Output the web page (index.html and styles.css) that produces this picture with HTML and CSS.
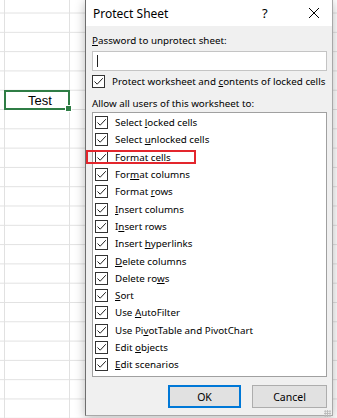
FILE: index.html
```html
<!DOCTYPE html>
<html lang="en">
<head>
    <meta charset="UTF-8">
    <title>Protect Sheet</title>
    <link rel="stylesheet" href="styles.css">
</head>
<body>
    <div class="sheet">
        <div class="cell-active">
            <span>Test</span>
            <i class="fill-handle"></i>
        </div>

        <div class="dialog">
            <div class="titlebar">
                <span class="title">Protect Sheet</span>
                <span class="help">?</span>
                <span class="close">
                    <svg width="12" height="12" viewBox="0 0 12 12"><path d="M1 1 L11 11 M11 1 L1 11" stroke="#000" stroke-width="1" fill="none"/></svg>
                </span>
            </div>

            <div class="dialog-body">
                <div class="label"><u>P</u>assword to unprotect sheet:</div>
                <div class="input"><i class="caret"></i></div>

                <div class="check-row">
                    <span class="box"><svg width="11" height="11" viewBox="0 0 11 11"><path d="M1.5 5.5 L4.2 8.2 L9.8 2.2" stroke="#222" stroke-width="1" fill="none"/></svg></span>
                    <span class="text">Protect worksheet and <u>c</u>ontents of locked cells</span>
                </div>

                <div class="label allow">Allow all users of this worksheet to:</div>

                <div class="listbox">
                    <div class="item"><span class="box"><svg width="11" height="11" viewBox="0 0 11 11"><path d="M1.5 5.5 L4.2 8.2 L9.8 2.2" stroke="#222" stroke-width="1" fill="none"/></svg></span><span class="text">Select <u>l</u>ocked cells</span></div>
                    <div class="item"><span class="box"><svg width="11" height="11" viewBox="0 0 11 11"><path d="M1.5 5.5 L4.2 8.2 L9.8 2.2" stroke="#222" stroke-width="1" fill="none"/></svg></span><span class="text">Select <u>u</u>nlocked cells</span></div>
                    <div class="item"><span class="box"><svg width="11" height="11" viewBox="0 0 11 11"><path d="M1.5 5.5 L4.2 8.2 L9.8 2.2" stroke="#222" stroke-width="1" fill="none"/></svg></span><span class="text"><u>F</u>ormat cells</span><i class="highlight"></i></div>
                    <div class="item"><span class="box"><svg width="11" height="11" viewBox="0 0 11 11"><path d="M1.5 5.5 L4.2 8.2 L9.8 2.2" stroke="#222" stroke-width="1" fill="none"/></svg></span><span class="text">For<u>m</u>at columns</span></div>
                    <div class="item"><span class="box"><svg width="11" height="11" viewBox="0 0 11 11"><path d="M1.5 5.5 L4.2 8.2 L9.8 2.2" stroke="#222" stroke-width="1" fill="none"/></svg></span><span class="text">Format <u>r</u>ows</span></div>
                    <div class="item"><span class="box"><svg width="11" height="11" viewBox="0 0 11 11"><path d="M1.5 5.5 L4.2 8.2 L9.8 2.2" stroke="#222" stroke-width="1" fill="none"/></svg></span><span class="text"><u>I</u>nsert columns</span></div>
                    <div class="item"><span class="box"><svg width="11" height="11" viewBox="0 0 11 11"><path d="M1.5 5.5 L4.2 8.2 L9.8 2.2" stroke="#222" stroke-width="1" fill="none"/></svg></span><span class="text">I<u>n</u>sert rows</span></div>
                    <div class="item"><span class="box"><svg width="11" height="11" viewBox="0 0 11 11"><path d="M1.5 5.5 L4.2 8.2 L9.8 2.2" stroke="#222" stroke-width="1" fill="none"/></svg></span><span class="text">Insert <u>h</u>yperlinks</span></div>
                    <div class="item"><span class="box"><svg width="11" height="11" viewBox="0 0 11 11"><path d="M1.5 5.5 L4.2 8.2 L9.8 2.2" stroke="#222" stroke-width="1" fill="none"/></svg></span><span class="text"><u>D</u>elete columns</span></div>
                    <div class="item"><span class="box"><svg width="11" height="11" viewBox="0 0 11 11"><path d="M1.5 5.5 L4.2 8.2 L9.8 2.2" stroke="#222" stroke-width="1" fill="none"/></svg></span><span class="text">Delete ro<u>w</u>s</span></div>
                    <div class="item"><span class="box"><svg width="11" height="11" viewBox="0 0 11 11"><path d="M1.5 5.5 L4.2 8.2 L9.8 2.2" stroke="#222" stroke-width="1" fill="none"/></svg></span><span class="text"><u>S</u>ort</span></div>
                    <div class="item"><span class="box"><svg width="11" height="11" viewBox="0 0 11 11"><path d="M1.5 5.5 L4.2 8.2 L9.8 2.2" stroke="#222" stroke-width="1" fill="none"/></svg></span><span class="text">Use <u>A</u>utoFilter</span></div>
                    <div class="item"><span class="box"><svg width="11" height="11" viewBox="0 0 11 11"><path d="M1.5 5.5 L4.2 8.2 L9.8 2.2" stroke="#222" stroke-width="1" fill="none"/></svg></span><span class="text">Use Pi<u>v</u>otTable and PivotChart</span></div>
                    <div class="item"><span class="box"><svg width="11" height="11" viewBox="0 0 11 11"><path d="M1.5 5.5 L4.2 8.2 L9.8 2.2" stroke="#222" stroke-width="1" fill="none"/></svg></span><span class="text">Edit <u>o</u>bjects</span></div>
                    <div class="item"><span class="box"><svg width="11" height="11" viewBox="0 0 11 11"><path d="M1.5 5.5 L4.2 8.2 L9.8 2.2" stroke="#222" stroke-width="1" fill="none"/></svg></span><span class="text"><u>E</u>dit scenarios</span></div>
                </div>

                <div class="buttons">
                    <button class="default">OK</button>
                    <button>Cancel</button>
                </div>
                <i class="grip"></i>
            </div>
        </div>
    </div>
</body>
</html>
```

FILE: styles.css
```css
body {
    margin: 0;
    font-family: 'Noto Sans', sans-serif;
    color: #000;
    overflow: hidden;
}
.sheet {
    position: relative;
    width: 337px;
    height: 418px;
    padding: 90px 0 0 4px;
    box-sizing: border-box;
    background-color: #fff;
    background-image:
        linear-gradient(to right, transparent 4px, #e1e1e1 4px, #e1e1e1 5px, transparent 5px, transparent 69px, #e1e1e1 69px, #e1e1e1 70px, transparent 70px),
        repeating-linear-gradient(to bottom, transparent 0, transparent 12.8px, #e1e1e1 12.8px, #e1e1e1 13.8px, transparent 13.8px, transparent 19.3px);
    background-size: 100% 100%, 100% 19.3px;
}
.cell-active {
    position: relative;
    width: 66px;
    height: 20px;
    box-sizing: border-box;
    border: 2px solid #2f7d45;
    background: #fff;
    font-family: 'Liberation Sans', sans-serif;
    font-size: 13px;
    display: flex;
    align-items: center;
    justify-content: center;
    padding-left: 6px;
}
.fill-handle {
    position: absolute;
    right: -4px;
    bottom: -4px;
    width: 5px;
    height: 5px;
    background: #2f7d45;
    border: 1px solid #fff;
}

.dialog {
    position: absolute;
    left: 85px;
    top: 0;
    width: 248px;
    height: 416px;
    box-sizing: border-box;
    background: #f0f0f0;
    border-left: 1px solid #6e6e6e;
    border-right: 1px solid #a8a8a8;
    border-bottom: 1px solid #a8a8a8;
    box-shadow: 0 2px 10px rgba(0,0,0,0.28);
}
.titlebar {
    height: 26px;
    background: #fff;
    display: flex;
    align-items: center;
    padding-left: 7px;
    font-size: 12px;
}
.title {
    flex: 1;
}
.help {
    width: 46px;
    font-size: 13px;
}
.close {
    width: 24px;
    display: flex;
    align-items: center;
}

.dialog-body {
    position: relative;
    padding: 7px 5px 0 6px;
    font-size: 9.8px;
}
.label {
    height: 16px;
    line-height: 16px;
    white-space: nowrap;
}
.text {
    white-space: nowrap;
}
.input {
    margin-top: 2px;
    height: 20px;
    box-sizing: border-box;
    background: #fff;
    border: 1px solid #c4c4c4;
    position: relative;
}
.caret {
    position: absolute;
    left: 4px;
    top: 3px;
    width: 1px;
    height: 12px;
    background: #222;
}
.check-row {
    margin-top: 2px;
    height: 16px;
    display: flex;
    align-items: center;
    gap: 7px;
}
.box {
    width: 13px;
    height: 13px;
    box-sizing: border-box;
    border: 1px solid #333;
    background: #fff;
    display: flex;
    align-items: center;
    justify-content: center;
    flex-shrink: 0;
}
.allow {
    margin-top: 7px;
}
.listbox {
    height: 265px;
    box-sizing: border-box;
    background: #fff;
    border: 1px solid #a0a0a0;
    padding: 1px 0 0 2px;
}
.item {
    position: relative;
    height: 17.3px;
    display: flex;
    align-items: center;
    gap: 7px;
}
.highlight {
    position: absolute;
    left: -9px;
    top: 1px;
    width: 110px;
    height: 14px;
    border: 2px solid #e3262d;
    box-sizing: border-box;
}
.buttons {
    margin-top: 8px;
    display: flex;
    justify-content: flex-end;
    gap: 11px;
}
button {
    height: 23px;
    width: 75px;
    box-sizing: border-box;
    background: #e1e1e1;
    border: 1px solid #adadad;
    font-family: 'Noto Sans', sans-serif;
    font-size: 10.5px;
    color: #000;
    padding: 0;
}
button.default {
    width: 73px;
    border: 2px solid #0078d7;
}
.grip {
    position: absolute;
    right: 1px;
    bottom: -9px;
    width: 7px;
    height: 7px;
    background-image: radial-gradient(circle, #b8b8b8 0.8px, transparent 1px);
    background-size: 2.4px 2.4px;
}
```
